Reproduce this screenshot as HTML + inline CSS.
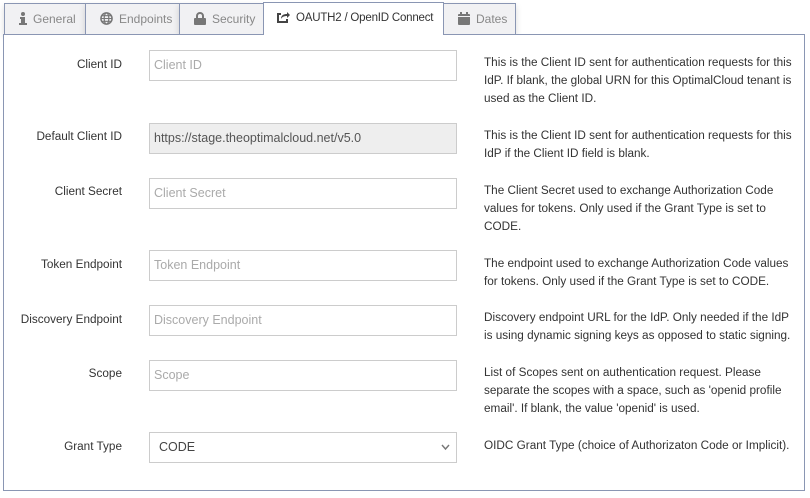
<!DOCTYPE html>
<html><head><style>
body{margin:0;width:810px;height:498px;background:#fff;font-family:"Liberation Sans",sans-serif;font-size:12px;color:#333;position:relative;overflow:hidden}
.tab{position:absolute;top:3px;height:31px;background:#f1f1f3;border:1px solid #8a96b3;border-bottom:none;box-sizing:border-box;color:#888;font-size:12px;line-height:30px;padding-left:14px;white-space:nowrap;overflow:hidden;box-shadow:0 3px 6px rgba(0,0,0,.15)}
.tab.act{background:#fff;color:#333;height:33px;top:2px;z-index:3;box-shadow:none}
.panel{position:absolute;left:3px;top:34px;width:802px;height:457px;border:1px solid #8a96b3;box-sizing:border-box;background:#fff;z-index:2}
.lbl{position:absolute;right:688px;text-align:right;font-size:11.75px;color:#333;z-index:4;white-space:nowrap}
.inp{position:absolute;left:149px;width:308px;height:31px;border:1px solid #ccc;box-sizing:border-box;color:#aaa;font-size:12.5px;line-height:29px;padding-left:4px;z-index:4;background:#fff}
.help{position:absolute;left:484px;width:312px;font-size:11.75px;line-height:18px;color:#333;z-index:4}
svg{vertical-align:-2px;margin-right:6px}
</style></head><body>
<div class="tab" style="left:4px;width:82px"><svg width="8" height="13" viewBox="0 0 8 13"><circle cx="4" cy="2" r="2" fill="#777"/><path d="M1 5h5v6h2v2H0v-2h2V7H1z" fill="#777"/></svg>General</div>
<div class="tab" style="left:85px;width:95px"><svg width="13" height="13" viewBox="0 0 14 14"><circle cx="7" cy="7" r="6" fill="none" stroke="#777" stroke-width="1.6"/><ellipse cx="7" cy="7" rx="2.5" ry="6" fill="none" stroke="#777" stroke-width="1.3"/><path d="M1 7h12M2 4h10M2 10h10" stroke="#777" stroke-width="1.2"/></svg>Endpoints</div>
<div class="tab" style="left:179px;width:85px"><svg width="12" height="13" viewBox="0 0 12 13"><path d="M3 6V4a3 3 0 016 0v2" fill="none" stroke="#777" stroke-width="2"/><rect x="0" y="6" width="12" height="7" rx="1" fill="#777"/></svg>Security</div>
<div class="tab act" style="left:263px;width:181px;padding-left:12px;font-size:11.5px;letter-spacing:-0.2px"><svg width="14" height="13" viewBox="0 0 14 13"><path d="M1 3h4v2H3v6h7V9h2v4H1z" fill="#444"/><path d="M5 9c0-4 3-5 6-5V2l3 3-3 3V6c-3 0-5 1-6 3z" fill="#444"/></svg>OAUTH2 / OpenID Connect</div>
<div class="tab" style="left:443px;width:73px"><svg width="12" height="13" viewBox="0 0 12 13"><rect x="0" y="2" width="12" height="11" rx="1" fill="#777"/><rect x="2" y="0" width="2" height="3" fill="#777"/><rect x="8" y="0" width="2" height="3" fill="#777"/><rect x="0" y="4" width="12" height="1" fill="#f1f1f3"/></svg>Dates</div>
<div class="panel"></div>

<div class="lbl" style="top:58px">Client ID</div>
<div class="inp" style="top:50px">Client ID</div>
<div class="help" style="top:54px">This is the Client ID sent for authentication requests for this IdP. If blank, the global URN for this OptimalCloud tenant is used as the Client ID.</div>

<div class="lbl" style="top:130px">Default Client ID</div>
<div class="inp" style="top:123px;background:#eee;color:#555">https://stage.theoptimalcloud.net/v5.0</div>
<div class="help" style="top:127px">This is the Client ID sent for authentication requests for this IdP if the Client ID field is blank.</div>

<div class="lbl" style="top:185px">Client Secret</div>
<div class="inp" style="top:178px">Client Secret</div>
<div class="help" style="top:182px">The Client Secret used to exchange Authorization Code values for tokens. Only used if the Grant Type is set to CODE.</div>

<div class="lbl" style="top:258px">Token Endpoint</div>
<div class="inp" style="top:250px">Token Endpoint</div>
<div class="help" style="top:255px">The endpoint used to exchange Authorization Code values for tokens. Only used if the Grant Type is set to CODE.</div>

<div class="lbl" style="top:313px">Discovery Endpoint</div>
<div class="inp" style="top:305px">Discovery Endpoint</div>
<div class="help" style="top:309px">Discovery endpoint URL for the IdP. Only needed if the IdP is using dynamic signing keys as opposed to static signing.</div>

<div class="lbl" style="top:367px">Scope</div>
<div class="inp" style="top:360px">Scope</div>
<div class="help" style="top:364px">List of Scopes sent on authentication request. Please separate the scopes with a space, such as 'openid profile email'. If blank, the value 'openid' is used.</div>

<div class="lbl" style="top:440px">Grant Type</div>
<div class="inp" style="top:432px;color:#444;padding-left:9px">CODE<svg style="position:absolute;right:0;top:11px" width="9" height="7" viewBox="0 0 9 7"><path d="M1 1l3.5 4L8 1" fill="none" stroke="#777" stroke-width="1.4"/></svg></div>
<div class="help" style="top:437px">OIDC Grant Type (choice of Authorizaton Code or Implicit).</div>
</body></html>
